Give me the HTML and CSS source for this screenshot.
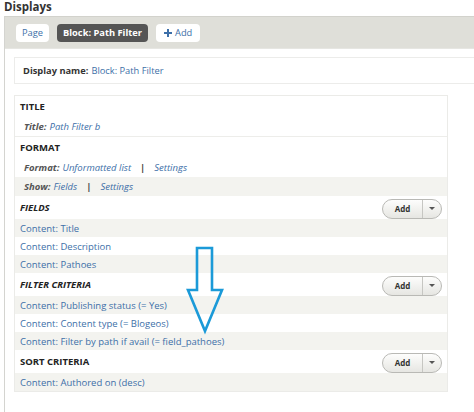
FILE: index.html
```html
<!DOCTYPE html>
<html lang="en">
<head>
    <meta charset="UTF-8">
    <meta name="viewport" content="width=device-width, initial-scale=1.0">
    <title>Displays</title>
    <link rel="stylesheet" href="styles.css">
</head>
<body>

<h1 class="page-title">Displays</h1>

<div class="displays">
    <div class="tabs">
        <a class="tab">Page</a>
        <a class="tab active">Block: Path Filter</a>
        <a class="tab add"><svg class="plus" width="8" height="8" viewBox="0 0 8 8"><path d="M3 0h2v3h3v2H5v3H3V5H0V3h3z"/></svg>Add</a>
    </div>

    <div class="display-body">
        <div class="display-name"><b>Display name:</b> <a>Block: Path Filter</a></div>

        <div class="column">
            <div class="section-head"><h3>TITLE</h3></div>
            <div class="row big line"><em class="label">Title:</em> <a class="em">Path Filter b</a></div>

            <div class="section-head"><h3>FORMAT</h3></div>
            <div class="row big"><em class="label">Format:</em> <a class="em">Unformatted list</a> <span class="sep">|</span> <a class="em">Settings</a></div>
            <div class="row big odd"><em class="label">Show:</em> <a class="em">Fields</a> <span class="sep">|</span> <a class="em">Settings</a></div>

            <div class="section-head tall">
                <h3 class="overridden">FIELDS</h3>
                <div class="add-btn"><span class="main">Add</span><span class="drop"></span></div>
            </div>
            <div class="row odd"><a>Content: Title</a></div>
            <div class="row"><a>Content: Description</a></div>
            <div class="row odd"><a>Content: Pathoes</a></div>

            <div class="section-head tall">
                <h3 class="overridden">FILTER CRITERIA</h3>
                <div class="add-btn"><span class="main">Add</span><span class="drop"></span></div>
            </div>
            <div class="row odd"><a>Content: Publishing status (= Yes)</a></div>
            <div class="row"><a>Content: Content type (= Blogeos)</a></div>
            <div class="row odd"><a>Content: Filter by path if avail (= field_pathoes)</a></div>

            <div class="section-head tall">
                <h3>SORT CRITERIA</h3>
                <div class="add-btn"><span class="main">Add</span><span class="drop"></span></div>
            </div>
            <div class="row odd"><a>Content: Authored on (desc)</a></div>
        </div>
    </div>
</div>

<!-- annotation arrow drawn over the list -->
<svg class="arrow" width="474" height="412" viewBox="0 0 474 412">
    <path d="M197 248H212V290H222L205 331L188 290H197Z"/>
</svg>

</body>
</html>
```

FILE: styles.css
```css
body {
    font-family: "Open Sans", "DejaVu Sans", sans-serif;
    margin: 0;
    background-color: #fff;
    color: #333;
    overflow: hidden;
}
a {
    color: #3d6fa8;
    text-decoration: none;
}
.page-title {
    font-size: 11.5px;
    font-weight: bold;
    line-height: 14px;
    margin: 0 0 0 4px;
    color: #333;
}
.displays {
    margin: 2px 0 0 4px;
    border-left: 1px solid #d4d4d0;
    height: 400px;
}
.tabs {
    display: flex;
    align-items: center;
    gap: 8px;
    height: 31px;
    padding-left: 11px;
    background-color: #dfdfd9;
    border-top: 1px solid #d2d2cc;
    border-bottom: 1px solid #e6e6e2;
}
.tab {
    display: flex;
    align-items: center;
    height: 18px;
    padding: 0 6px;
    font-size: 9.3px;
    border-radius: 4px;
    background-color: #fff;
    color: #3d6fa8;
}
.tab.active {
    background-color: #555;
    color: #fff;
    font-weight: bold;
}
.tab.add {
    padding: 0 8px;
}
.plus {
    fill: #3d6fa8;
    margin-right: 3px;
}
.display-body {
    padding: 8px 0 0 9px;
}
.display-name {
    height: 25px;
    display: flex;
    align-items: center;
    gap: 3px;
    padding-left: 8px;
    font-size: 9.3px;
    border: 1px solid #ececea;
    border-right: none;
}
.display-name b {
    color: #333;
}
.column {
    margin-top: 11px;
    width: 432px;
    border: 1px solid #ebebe8;
    font-size: 9.5px;
}
.section-head {
    display: flex;
    align-items: center;
    justify-content: space-between;
    height: 21px;
    padding: 0 5px 0 5px;
}
.section-head.tall {
    height: 23px;
}
.section-head h3 {
    margin: 0;
    font-size: 9.5px;
    font-weight: bold;
    color: #222;
}
.section-head h3.overridden {
    font-style: italic;
}
.row {
    display: flex;
    align-items: center;
    gap: 3px;
    height: 18px;
    padding-left: 5px;
}
.row.big {
    height: 19px;
}
.row.odd {
    background-color: #f3f3ef;
}
.row.line {
    border-bottom: 1px solid #ededea;
}
.label {
    font-weight: bold;
    color: #555;
    margin-left: 4px;
}
.em {
    font-style: italic;
}
.sep {
    font-style: italic;
    font-weight: bold;
    margin: 0 6px;
    color: #444;
}
.add-btn {
    display: flex;
    height: 18px;
    border: 1px solid #b9b9b5;
    border-radius: 10px;
    background: linear-gradient(#fdfdfc, #e6e6e2);
    margin-top: 2px;
}
.add-btn .main {
    width: 39px;
    display: flex;
    align-items: center;
    justify-content: center;
    font-size: 8px;
    font-weight: bold;
    color: #333;
    border-right: 1px solid #c6c6c2;
}
.add-btn .drop {
    width: 18px;
    display: flex;
    align-items: center;
    justify-content: center;
}
.add-btn .drop::after {
    content: "";
    border-left: 3px solid transparent;
    border-right: 3px solid transparent;
    border-top: 3px solid #555;
}
.arrow {
    position: absolute;
    top: 0;
    left: 0;
    pointer-events: none;
}
.arrow path {
    fill: none;
    stroke: #1b9ad8;
    stroke-width: 2.6;
}
```
